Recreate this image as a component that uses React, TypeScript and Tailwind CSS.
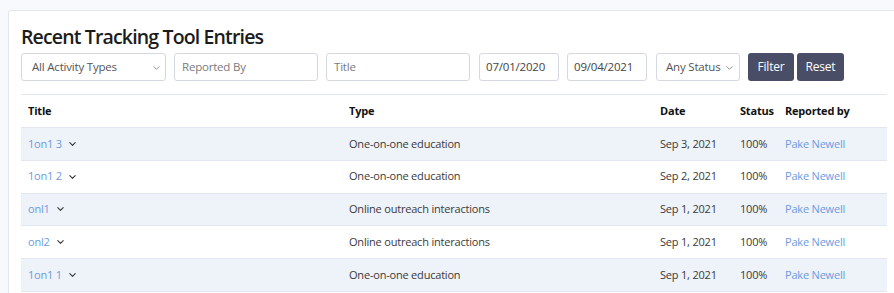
import React from "react";

const rows = [
  { title: "1on1 3", type: "One-on-one education", date: "Sep 3, 2021" },
  { title: "1on1 2", type: "One-on-one education", date: "Sep 2, 2021" },
  { title: "onl1", type: "Online outreach interactions", date: "Sep 1, 2021" },
  { title: "onl2", type: "Online outreach interactions", date: "Sep 1, 2021" },
  { title: "1on1 1", type: "One-on-one education", date: "Sep 1, 2021" },
];

function Chevron({ className = "", sw = 1.2 }: { className?: string; sw?: number }) {
  return (
    <svg viewBox="0 0 10 6" className={className} fill="none" stroke="currentColor" strokeWidth={sw} strokeLinecap="round" strokeLinejoin="round">
      <path d="M1 1 L5 5 L9 1" />
    </svg>
  );
}

export default function App() {
  return (
    <div className="h-[293px] w-[894px] overflow-hidden bg-[#f8f9fc] pt-[10px] pl-[8px] text-[#212529]" style={{ fontFamily: '"Open Sans", "Noto Sans", sans-serif' }}>
      <div className="w-[910px] h-[400px] rounded-[3px] border border-[#e3e6f0] bg-white px-[12px] pt-[13px]">
        <h1 className="text-[19.5px] leading-[26px] font-semibold tracking-[-0.85px] text-[#1c1c1c]">Recent Tracking Tool Entries</h1>
        <div className="mt-[3px] flex items-center text-[11.5px] tracking-[-0.2px]">
          <div className="relative flex h-[28px] w-[145px] items-center rounded-[3px] border border-[#d6d8e1] pl-[10px]">
            <span className="text-[#555]">All Activity Types</span>
            <Chevron className="absolute right-[5px] top-[12px] h-[4px] w-[7px] text-[#777]" />
          </div>
          <div className="ml-[8px] flex h-[28px] w-[144px] items-center rounded-[3px] border border-[#d6d8e1] pl-[7px]">
            <span className="text-[#7a7a7a]">Reported By</span>
          </div>
          <div className="ml-[8px] flex h-[28px] w-[144px] items-center rounded-[3px] border border-[#d6d8e1] pl-[7px]">
            <span className="text-[#7a7a7a]">Title</span>
          </div>
          <div className="ml-[9px] flex h-[28px] w-[80px] items-center rounded-[3px] border border-[#d6d8e1] pl-[6px]">
            <span className="text-[#444]">07/01/2020</span>
          </div>
          <div className="ml-[8px] flex h-[28px] w-[80px] items-center rounded-[3px] border border-[#d6d8e1] pl-[6px]">
            <span className="text-[#444]">09/04/2021</span>
          </div>
          <div className="relative ml-[9px] flex h-[28px] w-[84px] items-center rounded-[3px] border border-[#d6d8e1] pl-[9px]">
            <span className="text-[#555]">Any Status</span>
            <Chevron className="absolute right-[6px] top-[12px] h-[4px] w-[7px] text-[#777]" />
          </div>
          <button className="ml-[8px] h-[28px] w-[46px] rounded-[3px] bg-[#4a4d66] text-[12px] text-white">Filter</button>
          <button className="ml-[3px] h-[28px] w-[47px] rounded-[3px] bg-[#4a4d66] text-[12px] text-white">Reset</button>
        </div>
        <table className="mt-[13px] w-[866px] table-fixed border-collapse text-[11px] tracking-[-0.2px]">
          <colgroup>
            <col className="w-[321px]" />
            <col className="w-[311px]" />
            <col className="w-[80px]" />
            <col className="w-[45px]" />
            <col className="w-[109px]" />
          </colgroup>
          <thead>
            <tr className="h-[33px] border-t border-b border-[#e3e6f0] text-left">
              <th className="pl-[7px] font-bold text-[#111]">Title</th>
              <th className="pl-[7px] font-bold text-[#111]">Type</th>
              <th className="pl-[7px] font-bold text-[#111]">Date</th>
              <th className="pl-[7px] font-bold text-[#111]">Status</th>
              <th className="pl-[7px] font-bold text-[#111]">Reported by</th>
            </tr>
          </thead>
          <tbody>
            {rows.map((r, i) => (
              <tr key={i} className={`h-[32.8px] border-b border-[#e3e6f0] ${i % 2 === 0 ? "bg-[#eef2f9]" : "bg-white"}`}>
                <td className="pl-[7px]">
                  <span className="inline-flex items-center text-[#6c9bdf]">
                    {r.title}
                    <Chevron className="ml-[7px] h-[4px] w-[7px] text-[#333]" sw={1.6} />
                  </span>
                </td>
                <td className="pl-[7px] text-[#3a3a3a]">{r.type}</td>
                <td className="pl-[7px] text-[#3a3a3a]">{r.date}</td>
                <td className="pl-[7px] text-[#3a3a3a]">100%</td>
                <td className="pl-[7px] text-[#6c9bdf]">Pake Newell</td>
              </tr>
            ))}
          </tbody>
        </table>
      </div>
    </div>
  );
}
